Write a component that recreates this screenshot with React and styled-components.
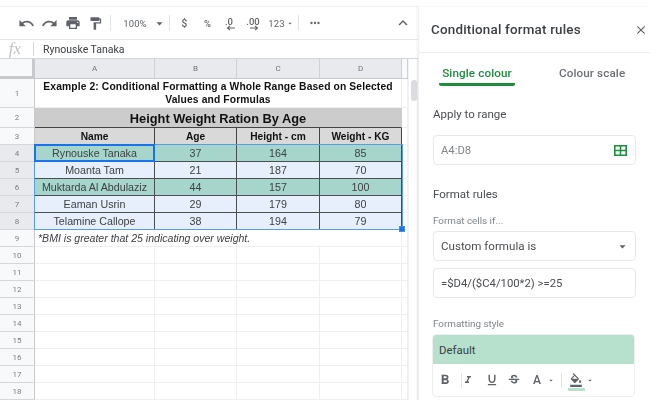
import React from 'react';
import styled, { createGlobalStyle } from 'styled-components';
import { MdUndo, MdRedo, MdPrint, MdFormatPaint, MdArrowDropDown, MdMoreHoriz, MdExpandLess, MdClose, MdFormatBold, MdFormatItalic, MdFormatUnderlined, MdStrikethroughS, MdFormatColorFill } from 'react-icons/md';

const Global = createGlobalStyle`
  html, body { margin: 0; padding: 0; background: #fff; }
  body { width: 650px; height: 400px; overflow: hidden; font-family: "Liberation Sans", Arial, sans-serif; }
  * { box-sizing: border-box; }
`;

const Page = styled.div`
  display: flex; width: 650px; height: 400px; overflow: hidden; filter: blur(0.35px);
`;
const Sheet = styled.div`
  width: 418px; height: 400px; flex: none; display: flex; flex-direction: column; overflow: hidden;
`;
const TopStrip = styled.div`
  height: 7px; flex: none; border-bottom: 1px solid #eceef0;
`;
const Toolbar = styled.div`
  height: 33px; flex: none; display: flex; align-items: center; color: #5f6368; border-bottom: 1px solid #e3e5e8; padding-left: 15px; position: relative;
`;
const ToolIcon = styled.span`
  width: ${p => p.$w || 23}px; flex: none; display: flex; justify-content: center; align-items: center; color: ${p => p.$c || '#5f6368'};
`;
const Sep = styled.span`
  width: 1px; height: 16px; flex: none; background: #e0e2e5; margin: 0 ${p => p.$r || 12}px 0 ${p => p.$l || 0}px;
`;
const ToolText = styled.span`
  font: ${p => p.$fs || 9.5}px Roboto, sans-serif; color: #5f6368; flex: none; width: ${p => p.$w || 23}px; text-align: center; white-space: nowrap; letter-spacing: 0.1px; font-weight: ${p => p.$b || 400};
`;
const DecimalBox = styled.span`
  position: relative; display: flex; flex: none; justify-content: center; width: ${p => p.$w}px; font: 500 9.5px Roboto, sans-serif; color: #5f6368; height: 16px; line-height: 13px;
`;
const DecimalArrow = styled.svg`
  position: absolute; left: ${p => p.$x}px; top: 10px;
`;
const Spacer = styled.span`flex: 1;`;
const FormulaBar = styled.div`
  height: 19px; flex: none; display: flex; align-items: center; border-bottom: 1px solid #d5d7da;
`;
const Fx = styled.span`
  width: 30px; margin-right: 3px; flex: none; text-align: center; font: italic 17px "Liberation Serif", serif; color: #c0c3c7;
`;
const FormulaSep = styled.span`
  width: 1px; height: 14px; flex: none; background: #d5d7da; margin-right: 9px;
`;
const FormulaText = styled.span`
  font: 10.5px Roboto, sans-serif; color: #3c4043;
`;
const SheetBody = styled.div`
  display: flex; flex: 1; min-height: 0;
`;
const Grid = styled.div`
  display: grid; width: 408px; flex: none; position: relative;
  grid-template-columns: 35px 120px 82px 83px 82px 6px;
  grid-template-rows: 20px 29px 20px 17px repeat(15, 17px);
`;
const Corner = styled.div`
  background: #f8f9fa; border-right: 3px solid #c7c9cc; border-bottom: 3px solid #c7c9cc;
`;
const ColHead = styled.div`
  background: ${p => p.$plain ? '#f8f9fa' : '#e8eaed'}; border-right: 1px solid #cfd1d4; border-bottom: 1px solid #c7c9cc;
  display: flex; align-items: center; justify-content: center; font: 8px Roboto, sans-serif; color: #6f7377;
`;
const RowHead = styled.div`
  background: ${p => p.$on ? '#e8eaed' : '#f8f9fa'}; border-right: 1px solid #c7c9cc; border-bottom: 1px solid #d5d7da;
  display: flex; align-items: center; justify-content: center; font: 8px Roboto, sans-serif; color: #7b7f83;
`;
const Cell = styled.div`
  background: ${p => p.$bg || '#fff'};
  border-right: 1px solid ${p => p.$line || '#eeeff0'};
  border-bottom: 1px solid ${p => p.$line || '#eeeff0'};
  display: flex; align-items: center; justify-content: center; text-align: center; padding-top: 1px;
  font-size: 10.7px; color: #3f4245; white-space: nowrap; line-height: 13px;
`;
const TitleCell = styled(Cell)`
  grid-column: 2 / 6; white-space: normal; font-weight: 700; font-size: 10.3px; color: #111; letter-spacing: 0.12px; line-height: 13px; padding: 0 2px;
`;
const BannerCell = styled(Cell)`
  grid-column: 2 / 6; font-weight: 700; font-size: 12.8px; color: #111; background: #cccccc; border-right: 1px solid #ccc; border-bottom: 1px solid #444;
`;
const HeadCell = styled(Cell)`
  font-weight: 700; color: #111; background: #d9d9d9; font-size: 10.2px;
`;
const NoteCell = styled(Cell)`
  grid-column: 2 / 6; justify-content: flex-start; font-style: italic; color: #3a3d40; padding-left: 3px; font-size: 10.55px;
`;
const Selection = styled.div`
  grid-column: 2 / 6; grid-row: 5 / 10; position: absolute; inset: -1px -1px 0 -1px; pointer-events: none;
  border: 1px solid #5a9be6; z-index: 2;
`;
const ActiveCell = styled.div`
  width: 121px; height: 18px; border: 2px solid #1a73e8; margin: -1px 0 0 -1px;
`;
const Handle = styled.div`
  position: absolute; right: -3px; bottom: -3px; width: 6px; height: 6px; background: #1a73e8; border: 1px solid #4a90e2;
`;
const ScrollTrack = styled.div`
  width: 10px; flex: none; border-left: 1px solid #f1f2f3; padding: 21px 2px 0 2px; border-right: 1px solid #f1f2f3;
`;
const Thumb = styled.div`
  height: 21px; border-radius: 3px; background: #dadce0; width: 6px;
`;
const Panel = styled.aside`
  width: 232px; flex: none; height: 400px; display: flex; flex-direction: column; background: #fff;
  margin-top: 7px; border-left: 1px solid #eceef0; box-shadow: -1px 0 2px rgba(60,64,67,.08); font-family: Roboto, sans-serif;
`;
const PanelHead = styled.div`
  height: 46px; flex: none; display: flex; align-items: center; justify-content: space-between; padding: 0 2px 0 12px; border-bottom: 1px solid #eceef0; margin-bottom: 0;
`;
const PanelTitle = styled.h2`
  margin: 0; font: 500 13.4px Roboto, sans-serif; color: #3c4043; letter-spacing: 0.2px;
`;
const CloseBtn = styled.span`
  display: flex; color: #5f6368; width: 14px; 
`;
const Tabs = styled.div`
  display: flex; height: 33px; flex: none; padding-left: 20px; gap: 0;
`;
const Tab = styled.div`
  font: 500 11.7px Roboto, sans-serif; color: ${p => p.$on ? '#1e8e3e' : '#6c7075'}; width: ${p => p.$on ? 76 : 'auto'}px; margin-right: ${p => p.$on ? 44 : 0}px;
  text-align: center; padding-top: 13px; height: 33px; border-bottom: ${p => p.$on ? '3px solid #1e8e3e' : 'none'}; white-space: nowrap; border-radius: 0 0 2px 2px;
  letter-spacing: 0.1px;
`;
const Body = styled.div`
  padding: 0 14px 0 14px; display: flex; flex-direction: column; flex: 1;
`;
const Section = styled.div`
  font: 400 11.5px Roboto, sans-serif; color: #4a4d51; margin-top: ${p => p.$mt}px; line-height: 14px;
`;
const Hint = styled.div`
  font: 400 9.85px Roboto, sans-serif; color: #80868b; margin-top: ${p => p.$mt}px; line-height: 12px;
`;
const Field = styled.div`
  height: 30px; flex: none; width: 203px; border: 1px solid #e6e8ea; border-radius: 4px; display: flex; align-items: center; justify-content: space-between;
  padding: 0 ${p => p.$pr ?? 7}px 0 7px; margin-top: ${p => p.$mt}px; font: 400 ${p => p.$fs || 11}px Roboto, sans-serif; color: ${p => p.$c || '#4a4d51'}; flex: none;
`;
const Style = styled.div`
  width: 203px; margin: 4px 0 0 -1px; border: 1px solid #eceef0; border-radius: 4px; overflow: hidden; flex: none;
`;
const Preview = styled.div`
  height: 29px; background: #b7e1cd; display: flex; align-items: center; padding-left: 6px; font: 400 11.4px Roboto, sans-serif; color: #3c4043;
`;
const StyleBar = styled.div`
  height: 32px; display: flex; align-items: center; padding-left: 3px; color: #5f6368;
`;
const FmtBtn = styled.span`
  display: flex; align-items: center; justify-content: center; flex: none; width: ${p => p.$w || 16}px; margin-left: ${p => p.$ml || 0}px; position: relative; color: #5f6368; font: 500 12px Roboto, sans-serif;
`;
const FmtSep = styled.span`
  width: 1px; height: 15px; background: #e2e4e6; flex: none; margin-left: ${p => p.$ml || 0}px;
`;
const FillBar = styled.span`
  position: absolute; left: 2px; bottom: -4px; width: 17px; height: 3px; background: #b7e1cd;
`;

const rows = [
  ['Rynouske Tanaka', 37, 164, 85],
  ['Moanta Tam', 21, 187, 70],
  ['Muktarda Al Abdulaziz', 44, 157, 100],
  ['Eaman Usrin', 29, 179, 80],
  ['Telamine Callope', 38, 194, 79],
];
const heads = ['Name', 'Age', 'Height - cm', 'Weight - KG'];
const isHit = i => i === 0 || i === 2;

const Arrow = ({ dir, x }) => (
  <DecimalArrow $x={x} width="9" height="6" viewBox="0 0 9 6">
    {dir === 'l'
      ? <path d="M9 3H2M4 .8 1.5 3 4 5.2" fill="none" stroke="#5f6368" strokeWidth="1.1" />
      : <path d="M0 3h7M5 .8 7.5 3 5 5.2" fill="none" stroke="#5f6368" strokeWidth="1.1" />}
  </DecimalArrow>
);

const RangeIcon = () => (
  <svg width="13" height="11" viewBox="0 0 13 11">
    <path d="M.8.8h11.4v9.4H.8zM6.5.8v9.4M.8 5.5h11.4" fill="none" stroke="#1e8e3e" strokeWidth="1.6" />
  </svg>
);

export default function App() {
  const blanks = Array.from({ length: 9 }, (_, i) => i + 10);
  return (
    <>
      <Global />
      <Page>
        <Sheet>
          <TopStrip />
          <Toolbar>
            <ToolIcon><MdUndo size={17} /></ToolIcon>
            <ToolIcon><MdRedo size={17} /></ToolIcon>
            <ToolIcon><MdPrint size={16} /></ToolIcon>
            <ToolIcon><MdFormatPaint size={15} /></ToolIcon>
            <Sep $l={3} $r={12} />
            <ToolText $w={24}>100%</ToolText>
            <ToolIcon $w={25}><MdArrowDropDown size={15} /></ToolIcon>
            <Sep $l={-3} $r={3} />
            <ToolText $w={23} $fs={10} $b={500}>$</ToolText>
            <ToolText $w={23} $fs={9.5} $b={500}>%</ToolText>
            <DecimalBox $w={20}>.0<Arrow dir="l" x={7} /></DecimalBox>
            <DecimalBox $w={28}>.00<Arrow dir="r" x={11} /></DecimalBox>
            <ToolText $w={19} $b={400}>123</ToolText>
            <ToolIcon $w={8}><MdArrowDropDown size={13} /></ToolIcon>
            <Sep $l={4} $r={7} />
            <ToolIcon $w={18}><MdMoreHoriz size={14} /></ToolIcon>
            <Spacer />
            <ToolIcon $w={20}><MdExpandLess size={18} /></ToolIcon>
            <ToolIcon $w={5} />
          </Toolbar>
          <FormulaBar>
            <Fx>fx</Fx>
            <FormulaSep />
            <FormulaText>Rynouske Tanaka</FormulaText>
          </FormulaBar>
          <SheetBody>
            <Grid>
              <Corner />
              {['A', 'B', 'C', 'D'].map(c => <ColHead key={c}>{c}</ColHead>)}
              <ColHead $plain />

              <RowHead>1</RowHead>
              <TitleCell>Example 2: Conditional Formatting a Whole Range Based on Selected Values and Formulas</TitleCell>
              <Cell />

              <RowHead>2</RowHead>
              <BannerCell>Height Weight Ration By Age</BannerCell>
              <Cell />

              <RowHead>3</RowHead>
              {heads.map(h => <HeadCell key={h} $line="#444">{h}</HeadCell>)}
              <Cell />

              {rows.map((r, i) => (
                <React.Fragment key={r[0]}>
                  <RowHead $on>{i + 4}</RowHead>
                  {r.map((v, j) => (
                    <Cell key={j} $bg={isHit(i) ? '#a5d5cb' : '#e6effb'} $line="#4a4d52">{v}</Cell>
                  ))}
                  <Cell />
                </React.Fragment>
              ))}

              <RowHead>9</RowHead>
              <NoteCell>*BMI is greater that 25 indicating over weight.</NoteCell>
              <Cell />

              {blanks.map(n => (
                <React.Fragment key={n}>
                  <RowHead>{n}</RowHead>
                  <Cell /><Cell /><Cell /><Cell /><Cell />
                </React.Fragment>
              ))}

              <Selection>
                <ActiveCell />
                <Handle />
              </Selection>
            </Grid>
            <ScrollTrack><Thumb /></ScrollTrack>
          </SheetBody>
        </Sheet>
        <Panel>
          <PanelHead>
            <PanelTitle>Conditional format rules</PanelTitle>
            <CloseBtn><MdClose size={14} /></CloseBtn>
          </PanelHead>
          <Tabs>
            <Tab $on>Single colour</Tab>
            <Tab>Colour scale</Tab>
          </Tabs>
          <Body>
            <Section $mt={21}>Apply to range</Section>
            <Field $mt={14} $c="#80868b" $fs={11.3} $pr={8}>A4:D8<RangeIcon /></Field>
            <Section $mt={22}>Format rules</Section>
            <Hint $mt={14}>Format cells if...</Hint>
            <Field $mt={4} $fs={11.6} $pr={5}>Custom formula is<MdArrowDropDown size={15} color="#5f6368" /></Field>
            <Field $mt={7} $fs={11.3}>=$D4/($C4/100*2) &gt;=25</Field>
            <Hint $mt={20}>Formatting style</Hint>
            <Style>
              <Preview>Default</Preview>
              <StyleBar>
                <FmtBtn $w={18}><MdFormatBold size={16} /></FmtBtn>
                <FmtSep $ml={7} />
                <FmtBtn $w={12}><MdFormatItalic size={14} /></FmtBtn>
                <FmtBtn $ml={10}><MdFormatUnderlined size={14} /></FmtBtn>
                <FmtBtn $ml={6}><MdStrikethroughS size={14} /></FmtBtn>
                <FmtBtn $w={14} $ml={8}>A</FmtBtn>
                <FmtBtn $w={8} $ml={3}><MdArrowDropDown size={11} /></FmtBtn>
                <FmtSep $ml={6} />
                <FmtBtn $w={20} $ml={4}><MdFormatColorFill size={14} /><FillBar /></FmtBtn>
                <FmtBtn $w={8}><MdArrowDropDown size={11} /></FmtBtn>
              </StyleBar>
            </Style>
          </Body>
        </Panel>
      </Page>
    </>
  );
}
